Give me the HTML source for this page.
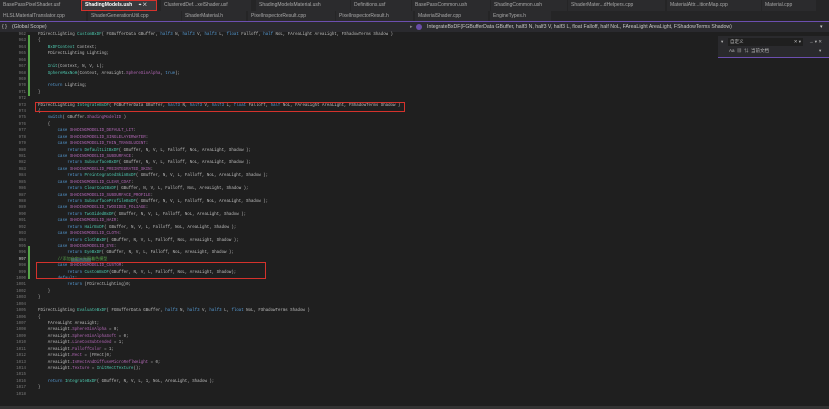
<!DOCTYPE html>
<html><head><meta charset="utf-8"><style>
*{margin:0;padding:0;box-sizing:border-box}
body{width:829px;height:409px;background:#1f1f1f;overflow:hidden;position:relative;font-family:"Liberation Sans","Noto Sans CJK SC",sans-serif;color:#b8b8b8}
.row{position:absolute;left:0;width:829px;height:10.5px;background:#252526}
.tab{position:absolute;top:0;height:10.5px;font-size:5px;line-height:10.5px;padding-left:3px;color:#a8a8a8;background:#2b2b2d}
#nav{position:absolute;top:22px;left:0;width:829px;height:10px;background:#2a2a2e;font-size:5.2px;line-height:10px;color:#c8c8c8}
#code{position:absolute;top:32px;left:0;width:829px}
.l{height:6.43px;line-height:6.43px;font-family:"Liberation Mono",monospace;font-size:4.08px;white-space:pre;position:relative;color:#bdbdbd}
.n{position:absolute;left:0;width:26px;text-align:right;color:#7a7a7a}
.c{position:absolute;left:38px}
.k{color:#569cd6}.f{color:#4ec9b0}.m{color:#b267b5}.t{color:#4ec9b0}.cm{color:#57a64a}
.box{position:absolute;border:1.3px solid #d4322c}
</style></head><body>
<div class="row" style="top:0">
<div class="tab" style="left:0;width:80px">BasePassPixelShader.usf</div>
<div class="tab" style="left:81px;width:76px;background:#3a3a3d;color:#fff;font-weight:bold;border:1.3px solid #d4322c;line-height:8px">ShadingModels.ush <span style="font-weight:normal;margin-left:5px">⌖ ✕</span></div>
<div class="tab" style="left:161px;width:90px">ClusteredDef...xelShader.usf</div>
<div class="tab" style="left:256px;width:94px">ShadingModelsMaterial.ush</div>
<div class="tab" style="left:351px;width:60px">Definitions.usf</div>
<div class="tab" style="left:412px;width:78px">BasePassCommon.ush</div>
<div class="tab" style="left:491px;width:76px">ShadingCommon.ush</div>
<div class="tab" style="left:568px;width:97px">ShaderMater...dHelpers.cpp</div>
<div class="tab" style="left:667px;width:94px">MaterialAttr...itionMap.cpp</div>
<div class="tab" style="left:762px;width:54px">Material.cpp</div>
</div>
<div class="row" style="top:11px">
<div class="tab" style="left:0;width:86px">HLSLMaterialTranslator.cpp</div>
<div class="tab" style="left:88px;width:93px">ShaderGenerationUtil.cpp</div>
<div class="tab" style="left:182px;width:64px">ShaderMaterial.h</div>
<div class="tab" style="left:248px;width:87px">PixelInspectorResult.cpp</div>
<div class="tab" style="left:336px;width:77px">PixelInspectorResult.h</div>
<div class="tab" style="left:415px;width:73px">MaterialShader.cpp</div>
<div class="tab" style="left:490px;width:61px">EngineTypes.h</div>
</div>
<div style="position:absolute;top:21px;left:0;width:829px;height:1.3px;background:#6c4fb0"></div>
<div id="nav">
<span style="position:absolute;left:2px">{ }</span>
<span style="position:absolute;left:12px">(Global Scope)</span>
<span style="position:absolute;left:410px;color:#888">▸</span>
<span style="position:absolute;left:416px;top:2px;width:6px;height:6px;border-radius:50%;background:#6a4fa8"></span>
<span style="position:absolute;left:427px">IntegrateBxDF(FGBufferData GBuffer, half3 N, half3 V, half3 L, float Falloff, half NoL, FAreaLight AreaLight, FShadowTerms Shadow)</span>
<span style="position:absolute;left:820px">▾</span>
</div>
<div style="position:absolute;left:28px;top:35px;width:1.6px;height:61px;background:#57a64a"></div>
<div style="position:absolute;left:28px;top:246px;width:1.6px;height:33px;background:#57a64a"></div>
<div id="code">
<div class="l"><span class="n">962</span><span class="c">FDirectLighting <span class="f">CustomBxDF</span>( FGBufferData GBuffer, <span class="k">half3</span> N, <span class="k">half3</span> V, <span class="k">half3</span> L, <span class="k">float</span> Falloff, <span class="k">half</span> NoL, FAreaLight AreaLight, FShadowTerms Shadow )</span></div>
<div class="l"><span class="n">963</span><span class="c">{</span></div>
<div class="l"><span class="n">964</span><span class="c">    <span class="t">BxDFContext</span> Context;</span></div>
<div class="l"><span class="n">965</span><span class="c">    FDirectLighting Lighting;</span></div>
<div class="l"><span class="n">966</span><span class="c"></span></div>
<div class="l"><span class="n">967</span><span class="c">    <span class="f">Init</span>(Context, N, V, L);</span></div>
<div class="l"><span class="n">968</span><span class="c">    <span class="f">SphereMaxNoH</span>(Context, AreaLight.<span class="m">SphereSinAlpha</span>, <span class="k">true</span>);</span></div>
<div class="l"><span class="n">969</span><span class="c"></span></div>
<div class="l"><span class="n">970</span><span class="c">    <span class="k">return</span> Lighting;</span></div>
<div class="l"><span class="n">971</span><span class="c">}</span></div>
<div class="l"><span class="n">972</span><span class="c"></span></div>
<div class="l"><span class="n">973</span><span class="c">FDirectLighting <span class="f">IntegrateBxDF</span>( FGBufferData GBuffer, <span class="k">half3</span> N, <span class="k">half3</span> V, <span class="k">half3</span> L, <span class="k">float</span> Falloff, <span class="k">half</span> NoL, FAreaLight AreaLight, FShadowTerms Shadow )</span></div>
<div class="l"><span class="n">974</span><span class="c">{</span></div>
<div class="l"><span class="n">975</span><span class="c">    <span class="k">switch</span>( GBuffer.<span class="m">ShadingModelID</span> )</span></div>
<div class="l"><span class="n">976</span><span class="c">    {</span></div>
<div class="l"><span class="n">977</span><span class="c">        <span class="k">case</span> <span class="m">SHADINGMODELID_DEFAULT_LIT</span>:</span></div>
<div class="l"><span class="n">978</span><span class="c">        <span class="k">case</span> <span class="m">SHADINGMODELID_SINGLELAYERWATER</span>:</span></div>
<div class="l"><span class="n">979</span><span class="c">        <span class="k">case</span> <span class="m">SHADINGMODELID_THIN_TRANSLUCENT</span>:</span></div>
<div class="l"><span class="n">980</span><span class="c">            <span class="k">return</span> <span class="f">DefaultLitBxDF</span>( GBuffer, N, V, L, Falloff, NoL, AreaLight, Shadow );</span></div>
<div class="l"><span class="n">981</span><span class="c">        <span class="k">case</span> <span class="m">SHADINGMODELID_SUBSURFACE</span>:</span></div>
<div class="l"><span class="n">982</span><span class="c">            <span class="k">return</span> <span class="f">SubsurfaceBxDF</span>( GBuffer, N, V, L, Falloff, NoL, AreaLight, Shadow );</span></div>
<div class="l"><span class="n">983</span><span class="c">        <span class="k">case</span> <span class="m">SHADINGMODELID_PREINTEGRATED_SKIN</span>:</span></div>
<div class="l"><span class="n">984</span><span class="c">            <span class="k">return</span> <span class="f">PreintegratedSkinBxDF</span>( GBuffer, N, V, L, Falloff, NoL, AreaLight, Shadow );</span></div>
<div class="l"><span class="n">985</span><span class="c">        <span class="k">case</span> <span class="m">SHADINGMODELID_CLEAR_COAT</span>:</span></div>
<div class="l"><span class="n">986</span><span class="c">            <span class="k">return</span> <span class="f">ClearCoatBxDF</span>( GBuffer, N, V, L, Falloff, NoL, AreaLight, Shadow );</span></div>
<div class="l"><span class="n">987</span><span class="c">        <span class="k">case</span> <span class="m">SHADINGMODELID_SUBSURFACE_PROFILE</span>:</span></div>
<div class="l"><span class="n">988</span><span class="c">            <span class="k">return</span> <span class="f">SubsurfaceProfileBxDF</span>( GBuffer, N, V, L, Falloff, NoL, AreaLight, Shadow );</span></div>
<div class="l"><span class="n">989</span><span class="c">        <span class="k">case</span> <span class="m">SHADINGMODELID_TWOSIDED_FOLIAGE</span>:</span></div>
<div class="l"><span class="n">990</span><span class="c">            <span class="k">return</span> <span class="f">TwoSidedBxDF</span>( GBuffer, N, V, L, Falloff, NoL, AreaLight, Shadow );</span></div>
<div class="l"><span class="n">991</span><span class="c">        <span class="k">case</span> <span class="m">SHADINGMODELID_HAIR</span>:</span></div>
<div class="l"><span class="n">992</span><span class="c">            <span class="k">return</span> <span class="f">HairBxDF</span>( GBuffer, N, V, L, Falloff, NoL, AreaLight, Shadow );</span></div>
<div class="l"><span class="n">993</span><span class="c">        <span class="k">case</span> <span class="m">SHADINGMODELID_CLOTH</span>:</span></div>
<div class="l"><span class="n">994</span><span class="c">            <span class="k">return</span> <span class="f">ClothBxDF</span>( GBuffer, N, V, L, Falloff, NoL, AreaLight, Shadow );</span></div>
<div class="l"><span class="n">995</span><span class="c">        <span class="k">case</span> <span class="m">SHADINGMODELID_EYE</span>:</span></div>
<div class="l"><span class="n">996</span><span class="c">            <span class="k">return</span> <span class="f">EyeBxDF</span>( GBuffer, N, V, L, Falloff, NoL, AreaLight, Shadow );</span></div>
<div class="l"><span class="n" style="color:#ccc">997</span><span class="c">        <span class="cm">//添加<span style="background:#3a4a5a">自定义光照</span>着色模型</span></span></div>
<div class="l"><span class="n">998</span><span class="c">        <span class="k">case</span> <span class="m">SHADINGMODELID_CUSTOM</span>:</span></div>
<div class="l"><span class="n">999</span><span class="c">            <span class="k">return</span> <span class="f">CustomBxDF</span>(GBuffer, N, V, L, Falloff, NoL, AreaLight, Shadow);</span></div>
<div class="l"><span class="n">1000</span><span class="c">        <span class="k">default</span>:</span></div>
<div class="l"><span class="n">1001</span><span class="c">            <span class="k">return</span> (FDirectLighting)0;</span></div>
<div class="l"><span class="n">1002</span><span class="c">    }</span></div>
<div class="l"><span class="n">1003</span><span class="c">}</span></div>
<div class="l"><span class="n">1004</span><span class="c"></span></div>
<div class="l"><span class="n">1005</span><span class="c">FDirectLighting <span class="f">EvaluateBxDF</span>( FGBufferData GBuffer, <span class="k">half3</span> N, <span class="k">half3</span> V, <span class="k">half3</span> L, <span class="k">float</span> NoL, FShadowTerms Shadow )</span></div>
<div class="l"><span class="n">1006</span><span class="c">{</span></div>
<div class="l"><span class="n">1007</span><span class="c">    FAreaLight AreaLight;</span></div>
<div class="l"><span class="n">1008</span><span class="c">    AreaLight.<span class="m">SphereSinAlpha</span> = 0;</span></div>
<div class="l"><span class="n">1009</span><span class="c">    AreaLight.<span class="m">SphereSinAlphaSoft</span> = 0;</span></div>
<div class="l"><span class="n">1010</span><span class="c">    AreaLight.<span class="m">LineCosSubtended</span> = 1;</span></div>
<div class="l"><span class="n">1011</span><span class="c">    AreaLight.<span class="m">FalloffColor</span> = 1;</span></div>
<div class="l"><span class="n">1012</span><span class="c">    AreaLight.<span class="m">Rect</span> = (FRect)0;</span></div>
<div class="l"><span class="n">1013</span><span class="c">    AreaLight.<span class="m">IsRectAndDiffuseMicroReflWeight</span> = 0;</span></div>
<div class="l"><span class="n">1014</span><span class="c">    AreaLight.<span class="m">Texture</span> = <span class="f">InitRectTexture</span>();</span></div>
<div class="l"><span class="n">1015</span><span class="c"></span></div>
<div class="l"><span class="n">1016</span><span class="c">    <span class="k">return</span> <span class="f">IntegrateBxDF</span>( GBuffer, N, V, L, 1, NoL, AreaLight, Shadow );</span></div>
<div class="l"><span class="n">1017</span><span class="c">}</span></div>
<div class="l"><span class="n">1018</span><span class="c"></span></div>
</div>
<div class="box" style="left:35px;top:102px;width:370px;height:10px"></div>
<div class="box" style="left:36px;top:262px;width:230px;height:17px"></div>
<div style="position:absolute;left:718px;top:36px;width:111px;height:22px;background:#2a2a2d;border-bottom:1.5px solid #6c4fb0;font-size:4.5px;color:#bbb">
<span style="position:absolute;left:3px;top:3px">▾</span>
<div style="position:absolute;left:10px;top:1.5px;width:75px;height:8px;background:#1f1f1f;line-height:8px;padding-left:2px">自定义<span style="position:absolute;right:2px">✕ ▾</span></div>
<span style="position:absolute;left:91px;top:3px">→ ▾ ✕</span>
<span style="position:absolute;left:11px;top:12px">Aa&nbsp; ▦&nbsp; ⇅&nbsp; 当前文档</span>
<span style="position:absolute;left:101px;top:12px">▾</span>
</div>
<div style="position:absolute;left:0;top:406px;width:829px;height:3px;background:#333"></div>
</body></html>
